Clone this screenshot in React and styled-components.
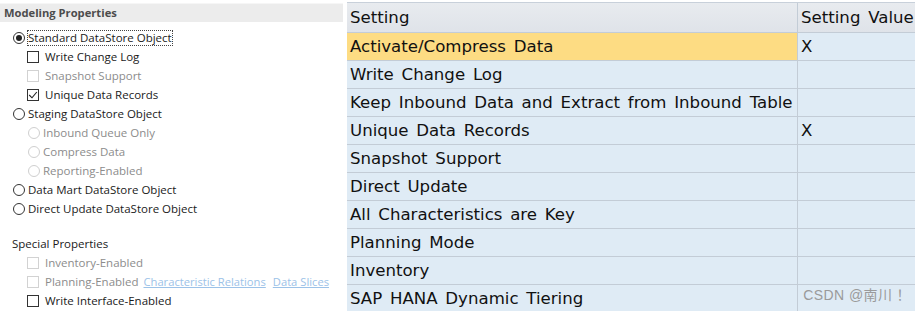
import React from 'react';
import styled, { createGlobalStyle } from 'styled-components';

const GlobalStyle = createGlobalStyle`
  html, body { margin: 0; padding: 0; background: #fff; }
  body { width: 915px; height: 311px; overflow: hidden; }
`;

const Page = styled.div`
  display: flex;
  gap: 4px;
  width: 915px;
  height: 311px;
  overflow: hidden;
`;

const Panel = styled.div`
  width: 343px;
  flex: none;
  padding-top: 3px;
  font-family: "Open Sans", "Noto Sans", sans-serif;
  font-size: 11.5px;
  color: #1a1a1a;
`;

const PanelTitle = styled.div`
  height: 18px;
  line-height: 18px;
  padding-left: 4px;
  background: #ececec;
  font-weight: 700;
  font-size: 11.2px;
  color: #4c4c4c;
  border-top: 1px solid #f6f6f6;
`;

const List = styled.div`
  display: flex;
  flex-direction: column;
  padding-top: 6px;
`;

const Row = styled.div`
  display: flex;
  align-items: center;
  height: 19px;
  padding-left: ${p => p.$indent}px;
  gap: ${p => p.$gap || 4}px;
  color: ${p => (p.$disabled ? '#8c8c8c' : '#1a1a1a')};
`;

const Radio = styled.span`
  width: 12px;
  height: 12px;
  box-sizing: border-box;
  border-radius: 50%;
  border: 1px solid ${p => (p.$disabled ? '#cfcfcf' : '#333')};
  display: flex;
  align-items: center;
  justify-content: center;
  &::after {
    content: '';
    display: ${p => (p.$on ? 'block' : 'none')};
    width: 6px;
    height: 6px;
    border-radius: 50%;
    background: #222;
  }
`;

const Box = styled.span`
  width: 12px;
  height: 12px;
  box-sizing: border-box;
  border: 1px solid ${p => (p.$disabled ? '#d2d2d2' : '#333')};
  display: flex;
  align-items: center;
  justify-content: center;
`;

const Label = styled.span`
  outline: ${p => (p.$focus ? '1px dotted #444' : 'none')};
  line-height: 14px;
`;

const Gap = styled.div`
  height: 16px;
`;

const SectionTitle = styled.div`
  height: 19px;
  line-height: 19px;
  padding-left: 12px;
`;

const Links = styled.span`
  display: flex;
  gap: 7px;
  margin-left: -1px;
`;

const LinkText = styled.span`
  color: #9cc2e8;
  text-decoration: underline;
  font-size: 11.2px;
`;

const Table = styled.div`
  flex: 1;
  margin-top: 2px;
  display: grid;
  grid-template-columns: 451px 1fr;
  grid-template-rows: 30px;
  grid-auto-rows: 28px;
  font-family: "DejaVu Sans", sans-serif;
  font-size: 16.6px;
  word-spacing: 2.5px;
  color: #111;
  position: relative;
  border-top: 1px solid #c8d0da;
`;

const Cell = styled.div`
  display: flex;
  align-items: center;
  padding-left: 3px;
  box-sizing: border-box;
  white-space: nowrap;
  overflow: hidden;
  border-bottom: 1px solid #c3ccd6;
  border-right: ${p => (p.$first ? '1px solid #c3ccd6' : 'none')};
  background: ${p => (p.$head ? 'linear-gradient(#e8ebef, #dfe3e9)' : p.$hot ? '#fddc83' : '#dfebf5')};
  padding-bottom: 1px;
`;

const Watermark = styled.span`
  position: absolute;
  right: 4px;
  bottom: 7px;
  font-family: "Liberation Sans", "Noto Sans CJK SC", sans-serif;
  font-size: 14px;
  word-spacing: 0;
  color: #9a9a9a;
  letter-spacing: 0.4px;
`;

const Check = () => (
  <svg width="10" height="10" viewBox="0 0 10 10">
    <path d="M1.2 5 L4 7.8 L8.8 2" fill="none" stroke="#222" strokeWidth="1.1" />
  </svg>
);

const settings = [
  ['Activate/Compress Data', 'X'],
  ['Write Change Log', ''],
  ['Keep Inbound Data and Extract from Inbound Table', ''],
  ['Unique Data Records', 'X'],
  ['Snapshot Support', ''],
  ['Direct Update', ''],
  ['All Characteristics are Key', ''],
  ['Planning Mode', ''],
  ['Inventory', ''],
  ['SAP HANA Dynamic Tiering', ''],
];

export default function App() {
  return (
    <Page>
      <GlobalStyle />
      <Panel>
        <PanelTitle>Modeling Properties</PanelTitle>
        <List>
          <Row $indent={13} $gap={3}><Radio $on /><Label $focus>Standard DataStore Object</Label></Row>
          <Row $indent={27} $gap={6}><Box /><Label>Write Change Log</Label></Row>
          <Row $indent={27} $gap={6} $disabled><Box $disabled /><Label>Snapshot Support</Label></Row>
          <Row $indent={27} $gap={6}><Box><Check /></Box><Label>Unique Data Records</Label></Row>
          <Row $indent={13} $gap={3}><Radio /><Label>Staging DataStore Object</Label></Row>
          <Row $indent={28} $gap={3} $disabled><Radio $disabled /><Label>Inbound Queue Only</Label></Row>
          <Row $indent={28} $gap={3} $disabled><Radio $disabled /><Label>Compress Data</Label></Row>
          <Row $indent={28} $gap={3} $disabled><Radio $disabled /><Label>Reporting-Enabled</Label></Row>
          <Row $indent={13} $gap={3}><Radio /><Label>Data Mart DataStore Object</Label></Row>
          <Row $indent={13} $gap={3}><Radio /><Label>Direct Update DataStore Object</Label></Row>
          <Gap />
          <SectionTitle>Special Properties</SectionTitle>
          <Row $indent={27} $gap={6} $disabled><Box $disabled /><Label>Inventory-Enabled</Label></Row>
          <Row $indent={27} $gap={6} $disabled>
            <Box $disabled />
            <Label>Planning-Enabled</Label>
            <Links>
              <LinkText>Characteristic Relations</LinkText>
              <LinkText>Data Slices</LinkText>
            </Links>
          </Row>
          <Row $indent={27} $gap={6}><Box /><Label>Write Interface-Enabled</Label></Row>
        </List>
      </Panel>
      <Table>
        <Cell $head $first>Setting</Cell>
        <Cell $head>Setting Value</Cell>
        {settings.map(([name, value], i) => (
          <React.Fragment key={name}>
            <Cell $first $hot={i === 0}>{name}</Cell>
            <Cell>{value}</Cell>
          </React.Fragment>
        ))}
        <Watermark>CSDN @南川 ！</Watermark>
      </Table>
    </Page>
  );
}
